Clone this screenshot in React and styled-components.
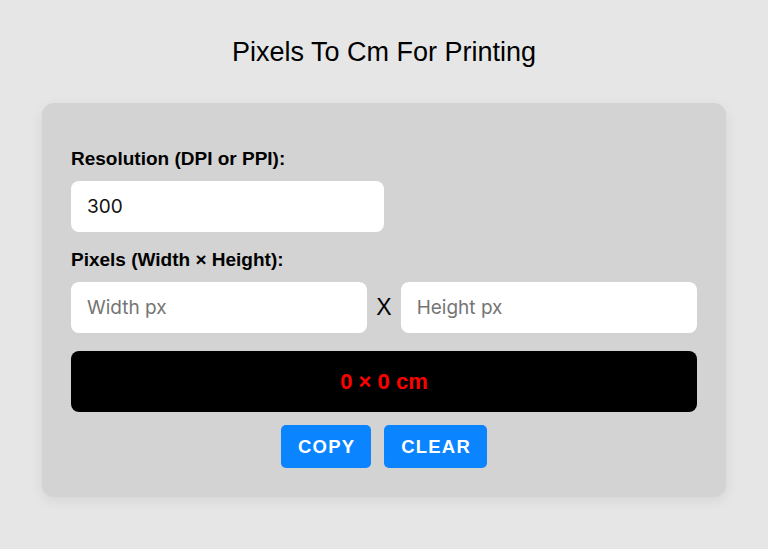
import React, { useState } from 'react';
import styled, { createGlobalStyle } from 'styled-components';

const GlobalStyle = createGlobalStyle`
  html, body {
    margin: 0;
    padding: 0;
    background: #e6e6e6;
  }
  body {
    font-family: "Liberation Sans", Arial, sans-serif;
  }
`;

const Page = styled.div`
  display: flex;
  flex-direction: column;
  align-items: center;
  padding-top: 36px;
  min-height: 549px;
  box-sizing: border-box;
`;

const Title = styled.h1`
  margin: 0 0 35px;
  font-size: 27px;
  line-height: 32px;
  font-weight: 400;
  color: #000;
`;

const Card = styled.div`
  width: 684px;
  box-sizing: border-box;
  padding: 45px 29px 29px;
  background: #d3d3d3;
  border-radius: 12px;
  box-shadow: 0 4px 14px rgba(0, 0, 0, 0.07);
  display: flex;
  flex-direction: column;
`;

const Label = styled.label`
  font-size: 19px;
  line-height: 21px;
  font-weight: 700;
  color: #000;
  margin-bottom: 12px;
`;

const Input = styled.input`
  box-sizing: border-box;
  width: ${({ $half }) => ($half ? '313px' : '100%')};
  flex: ${({ $half }) => ($half ? 'none' : '1')};
  height: 51px;
  border: none;
  outline: none;
  border-radius: 8px;
  background: #fff;
  padding: 0 16px;
  font-family: Inter, "Noto Sans", sans-serif;
  font-size: 19px;
  color: #111;
  margin-bottom: ${({ $half }) => ($half ? '17px' : '0')};

  ::placeholder {
    color: #8a8a8a;
    font-size: 18px;
  }
`;

const Row = styled.div`
  display: flex;
  align-items: center;
  gap: 9px;
  margin-bottom: 18px;
`;

const Times = styled.span`
  font-family: "Liberation Sans", Arial, sans-serif;
  font-size: 23px;
  color: #000;
`;

const Result = styled.div`
  height: 61px;
  background: #000;
  border-radius: 8px;
  display: flex;
  align-items: center;
  justify-content: center;
  color: #ff0000;
  font-family: "Liberation Sans", Arial, sans-serif;
  font-weight: 700;
  font-size: 22px;
  margin-bottom: 13px;
`;

const Buttons = styled.div`
  display: flex;
  justify-content: center;
  gap: 13px;
`;

const Button = styled.button`
  height: 43px;
  padding: 0 16px 0 17px;
  border: none;
  border-radius: 5px;
  background: #0a84ff;
  color: #fff;
  font-family: "Liberation Sans", Arial, sans-serif;
  font-weight: 700;
  font-size: 18.5px;
  letter-spacing: 1.2px;
  text-transform: uppercase;
  cursor: pointer;
`;

export default function App() {
  const [dpi, setDpi] = useState('300');
  const [w, setW] = useState('');
  const [h, setH] = useState('');

  const toCm = (px) => {
    const d = parseFloat(dpi);
    const p = parseFloat(px);
    if (!d || !p) return 0;
    return Math.round((p / d) * 2.54 * 100) / 100;
  };

  return (
    <>
      <GlobalStyle />
      <Page>
        <Title>Pixels To Cm For Printing</Title>
        <Card>
          <Label>Resolution (DPI or PPI):</Label>
          <Input $half value={dpi} onChange={(e) => setDpi(e.target.value)} />
          <Label>Pixels (Width × Height):</Label>
          <Row>
            <Input placeholder="Width px" value={w} onChange={(e) => setW(e.target.value)} />
            <Times>X</Times>
            <Input placeholder="Height px" value={h} onChange={(e) => setH(e.target.value)} />
          </Row>
          <Result>
            {toCm(w)} × {toCm(h)} cm
          </Result>
          <Buttons>
            <Button>Copy</Button>
            <Button
              onClick={() => {
                setW('');
                setH('');
              }}
            >
              Clear
            </Button>
          </Buttons>
        </Card>
      </Page>
    </>
  );
}
